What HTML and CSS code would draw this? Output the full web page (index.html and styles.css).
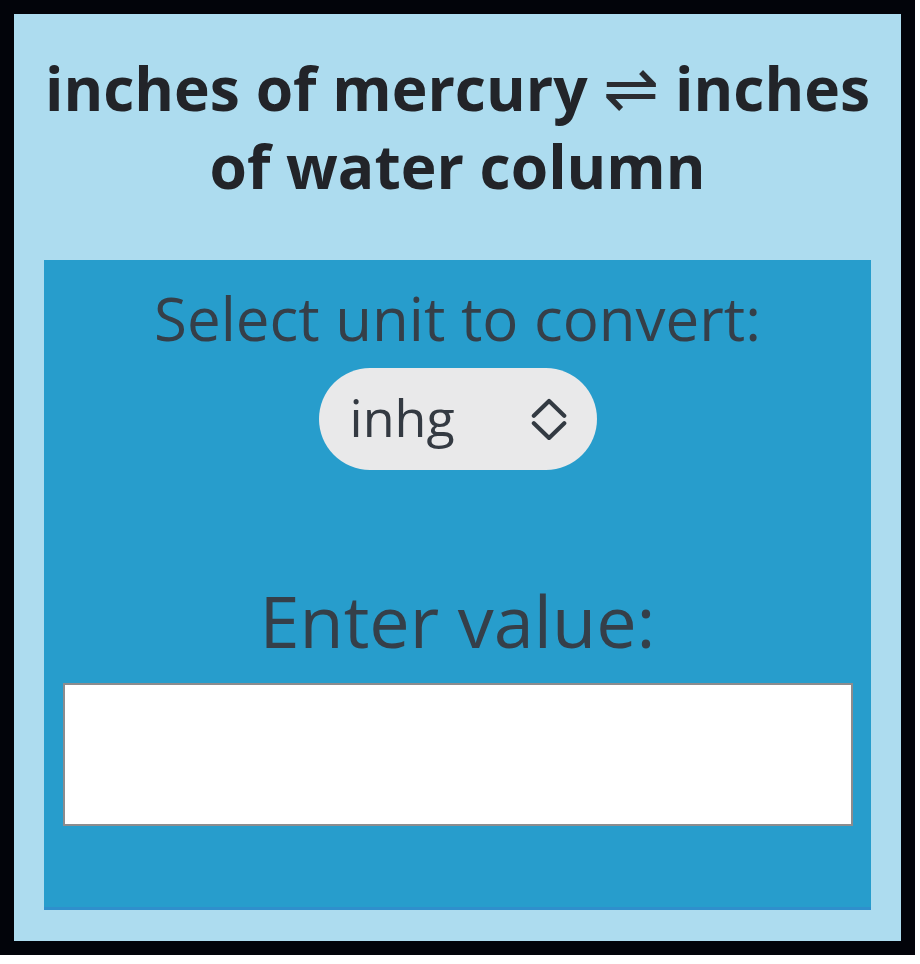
FILE: index.html
```html
<!DOCTYPE html>
<html lang="en">
<head>
<meta charset="utf-8">
<title>inches of mercury ⇌ inches of water column</title>
<link rel="stylesheet" href="styles.css">
</head>
<body>
<div class="frame">
  <h1 class="title">inches of mercury <span class="arrows">⇌</span> inches of water column</h1>
  <div class="panel">
    <label class="label" for="unit">Select unit to convert:</label>
    <div class="select">
      <span class="select-value">inhg</span>
      <svg class="chev" width="40" height="44" viewBox="0 0 40 44" aria-hidden="true">
        <path d="M3 18.5 L19 3 L35 18.5" fill="none" stroke="#333a42" stroke-width="4.4" stroke-linecap="round" stroke-linejoin="round"/>
        <path d="M3 26.5 L19 42 L35 26.5" fill="none" stroke="#333a42" stroke-width="4.4" stroke-linecap="round" stroke-linejoin="round"/>
      </svg>
    </div>
    <label class="label big" for="val">Enter value:</label>
    <input class="value" id="val" type="text">
  </div>
</div>
</body>
</html>
```

FILE: styles.css
```css
html, body {
  margin: 0;
  padding: 0;
  background: #ffffff;
}
.frame {
  box-sizing: border-box;
  width: 915px;
  height: 955px;
  border: 14px solid #02040a;
  background: #addcef;
  font-family: "Open Sans", "DejaVu Sans", sans-serif;
  padding: 0 30px;
}
.title {
  margin: 0;
  padding: 35px 0 0;
  height: 246px;
  box-sizing: border-box;
  font-size: 60.5px;
  line-height: 78px;
  font-weight: 700;
  color: #222429;
  text-align: center;
}
.arrows {
  font-family: "DejaVu Sans", sans-serif;
  font-weight: 200;
  font-size: 1.1em;
  line-height: 1;
  color: #2a2c30;
}
.panel {
  box-sizing: border-box;
  height: 650px;
  background: #279dcc;
  border-bottom: 3px solid #2f8fcc;
  display: flex;
  flex-direction: column;
  align-items: center;
  padding: 20px 19px 0;
}
.label {
  display: block;
  color: #353f49;
  font-size: 60px;
  line-height: 76px;
  text-align: center;
}
.label.big {
  font-size: 72px;
  line-height: 94px;
  margin-top: 103px;
}
.select {
  box-sizing: border-box;
  margin-top: 12px;
  width: 278px;
  height: 102px;
  border-radius: 51px;
  background: #e9e9ea;
  display: flex;
  align-items: center;
  justify-content: space-between;
  padding: 0 28px 0 31px;
}
.select-value {
  font-size: 52px;
  color: #343a42;
  line-height: 1;
  padding-bottom: 4px;
}
.chev {
  width: 38px;
  height: 42px;
}
.value {
  box-sizing: border-box;
  margin-top: 16px;
  width: 790px;
  height: 143px;
  border: 2px solid #8c8c8e;
  background: #ffffff;
  outline: none;
}
```
